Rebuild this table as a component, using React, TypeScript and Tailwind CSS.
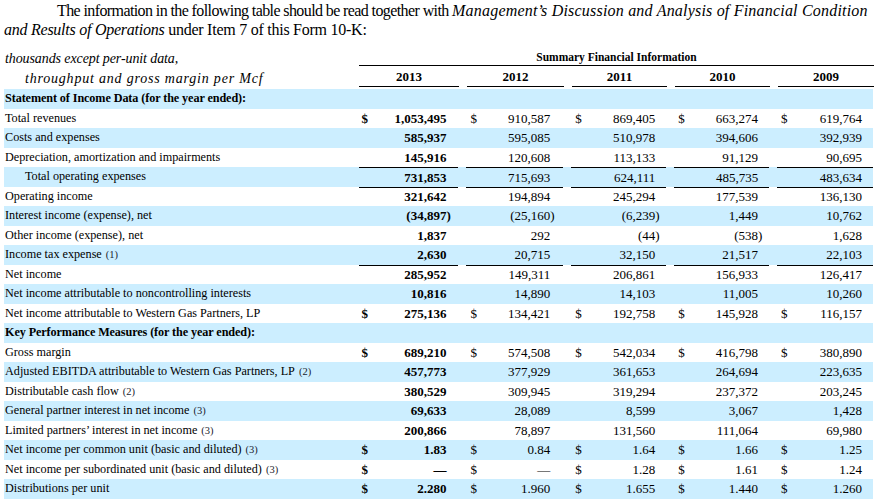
import React from 'react';

type Row = {
  label: string;
  note?: string;
  section?: boolean;
  indent?: boolean;
  dollar?: boolean;
  lineTop?: boolean;
  vals?: string[];
};

const ROWS: Row[] = [
  { label: 'Statement of Income Data (for the year ended):', section: true },
  { label: 'Total revenues', dollar: true, vals: ['1,053,495', '910,587', '869,405', '663,274', '619,764'] },
  { label: 'Costs and expenses', vals: ['585,937', '595,085', '510,978', '394,606', '392,939'] },
  { label: 'Depreciation, amortization and impairments', vals: ['145,916', '120,608', '113,133', '91,129', '90,695'] },
  { label: 'Total operating expenses', indent: true, lineTop: true, vals: ['731,853', '715,693', '624,111', '485,735', '483,634'] },
  { label: 'Operating income', lineTop: true, vals: ['321,642', '194,894', '245,294', '177,539', '136,130'] },
  { label: 'Interest income (expense), net', vals: ['(34,897)', '(25,160)', '(6,239)', '1,449', '10,762'] },
  { label: 'Other income (expense), net', vals: ['1,837', '292', '(44)', '(538)', '1,628'] },
  { label: 'Income tax expense', note: '(1)', vals: ['2,630', '20,715', '32,150', '21,517', '22,103'] },
  { label: 'Net income', lineTop: true, vals: ['285,952', '149,311', '206,861', '156,933', '126,417'] },
  { label: 'Net income attributable to noncontrolling interests', vals: ['10,816', '14,890', '14,103', '11,005', '10,260'] },
  { label: 'Net income attributable to Western Gas Partners, LP', dollar: true, vals: ['275,136', '134,421', '192,758', '145,928', '116,157'] },
  { label: 'Key Performance Measures (for the year ended):', section: true },
  { label: 'Gross margin', dollar: true, vals: ['689,210', '574,508', '542,034', '416,798', '380,890'] },
  { label: 'Adjusted EBITDA attributable to Western Gas Partners, LP', note: '(2)', vals: ['457,773', '377,929', '361,653', '264,694', '223,635'] },
  { label: 'Distributable cash flow', note: '(2)', vals: ['380,529', '309,945', '319,294', '237,372', '203,245'] },
  { label: 'General partner interest in net income', note: '(3)', vals: ['69,633', '28,089', '8,599', '3,067', '1,428'] },
  { label: 'Limited partners\u2019 interest in net income', note: '(3)', vals: ['200,866', '78,897', '131,560', '111,064', '69,980'] },
  { label: 'Net income per common unit (basic and diluted)', note: '(3)', dollar: true, vals: ['1.83', '0.84', '1.64', '1.66', '1.25'] },
  { label: 'Net income per subordinated unit (basic and diluted)', note: '(3)', dollar: true, vals: ['\u2014', '\u2014', '1.28', '1.61', '1.24'] },
  { label: 'Distributions per unit', dollar: true, vals: ['2.280', '1.960', '1.655', '1.440', '1.260'] },
];

const YEARS = ['2013', '2012', '2011', '2010', '2009'];
// column group boxes (width + gap) and the figures' right padding, read off the filing
const boxCls = ['w-[100px]', 'ml-[8px] w-[97px]', 'ml-[8px] w-[95px]', 'ml-[8px] w-[95px]', 'ml-[8px] w-[96px]'];
const padCls = ['pl-[3px] pr-[8px]', 'pl-[4px] pr-[9px]', 'pl-[4px] pr-[7px]', 'pl-[4px] pr-[7px]', 'pl-[4px] pr-[7px]'];

function Figure({ v, bold }: { v: string; bold: boolean }) {
  const neg = v.endsWith(')');
  const body = neg ? v.slice(0, -1) : v;
  return (
    <span className={bold ? 'font-bold' : ''}>
      {body}
      <span className="inline-block w-[4px]">{neg ? ')' : ''}</span>
    </span>
  );
}

export default function App() {
  return (
    <div className="w-[877px] h-[501px] overflow-hidden bg-white text-black font-['Liberation_Serif','Times_New_Roman',serif]">
      <p className="pt-[1px] text-[16px] leading-[19px] whitespace-nowrap">
        <span className="pl-[57px] tracking-[-0.6px]">The information in the following table should be read together with </span>
        <i className="tracking-[0.2px]">Management&rsquo;s Discussion and Analysis of Financial Condition</i>
        <br />
        <span className="pl-[4px] tracking-[-0.25px]">
          <i>and Results of Operations</i> under Item 7 of this Form 10-K:
        </span>
      </p>

      {/* column heads */}
      <div className="mt-[10px] flex pl-[4px]">
        <div className="w-[355px] text-[14px] italic leading-[20px]">
          <div className="pl-[1px] tracking-[-0.1px]">thousands except per-unit data,</div>
          <div className="pl-[21px] tracking-[0.8px]">throughput and gross margin per Mcf</div>
        </div>
        <div className="w-[515px]">
          <div className="h-[17px] border-b border-black text-center text-[11.5px] font-bold leading-[17px]">Summary Financial Information</div>
          <div className="flex h-[21px]">
            {YEARS.map((y, i) => (
              <div key={y} className={`${boxCls[i]} border-b border-black text-center text-[13px] font-bold leading-[22px]`}>
                {y}
              </div>
            ))}
          </div>
        </div>
      </div>

      {/* rows */}
      <div className="pl-[4px] text-[13px]">
        {ROWS.map((r, i) => (
          <div key={r.label} className={`flex h-[19.5px] w-[869px] items-center leading-[19px] ${i % 2 === 0 ? 'bg-[#cceeff]' : 'bg-white'}`}>
            <div className={`w-[355px] whitespace-nowrap text-[12.2px] ${r.indent ? 'pl-[21px]' : 'pl-[1px]'} ${r.section ? 'font-bold tracking-[-0.1px]' : ''}`}>
              {r.label}
              {r.note && <span className="ml-[4px] text-[10.5px] text-[#1b1b2e]">{r.note}</span>}
            </div>
            {r.vals &&
              r.vals.map((v, j) => (
                <div
                  key={j}
                  className={`${boxCls[j]} ${padCls[j]} flex h-full items-center justify-between ${r.lineTop ? 'border-t border-black' : ''}`}
                >
                  <span className={j === 0 ? 'font-bold' : ''}>{r.dollar ? '$' : ''}</span>
                  <Figure v={v} bold={j === 0} />
                </div>
              ))}
          </div>
        ))}
      </div>
    </div>
  );
}
